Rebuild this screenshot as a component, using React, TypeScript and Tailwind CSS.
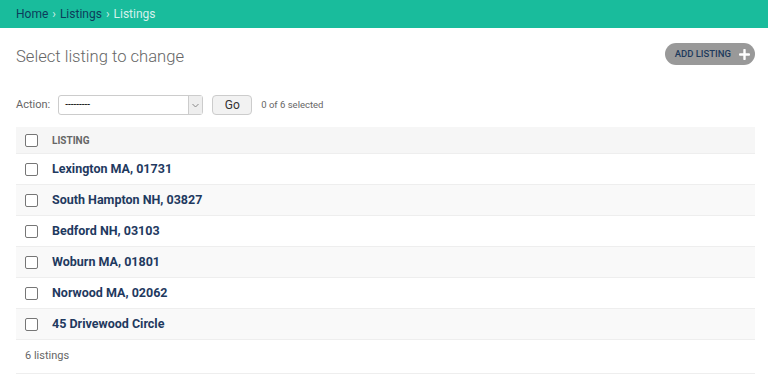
const listings = [
  "Lexington MA, 01731",
  "South Hampton NH, 03827",
  "Bedford NH, 03103",
  "Woburn MA, 01801",
  "Norwood MA, 02062",
  "45 Drivewood Circle",
];

const Box = () => (
  <span className="block h-[13px] w-[13px] rounded-[2px] border border-[#767676] bg-white" />
);

export default function App() {
  return (
    <div className="min-h-[376px] bg-white font-['Roboto',sans-serif] text-[13px] text-[#333]">
      {/* breadcrumbs */}
      <div className="flex h-[28px] items-center bg-[#19bc9c] px-4 text-[12px]">
        <span className="text-[#0c3c5b]">Home</span>
        <span className="px-[4px] text-[#cfeee8]">›</span>
        <span className="text-[#0c3c5b]">Listings</span>
        <span className="px-[4px] text-[#cfeee8]">›</span>
        <span className="text-[#d5f1ec]">Listings</span>
      </div>

      <div className="pl-4 pr-[13px]">
        <div className="flex items-center justify-between pt-[15px]">
          <h1 className="text-[16.6px] font-light text-[#666]">Select listing to change</h1>
          <button className="mb-[6px] flex h-[22px] items-center gap-[8px] rounded-full bg-[#999] pl-[10px] pr-[5px] text-[9.5px] font-medium uppercase text-[#1e3a5c]">
            Add listing
            <svg width="11" height="11" viewBox="0 0 12 12">
              <path d="M6 1v10M1 6h10" stroke="#fff" strokeWidth="2.6" strokeLinecap="round" />
            </svg>
          </button>
        </div>

        {/* actions */}
        <div className="mt-[23px] flex h-[22px] items-center text-[11px]">
          <span className="mr-[8px] text-[11px] text-[#666]">Action:</span>
          <div className="flex h-[20px] w-[145px] items-center rounded-[3px] border border-[#ccc] bg-white">
            <span className="flex-1 pl-[6px] text-[10px] leading-none text-black">---------</span>
            <span className="flex h-full w-[14px] items-center justify-center border-l border-[#ccc] bg-[#eee]">
              <svg width="7" height="5" viewBox="0 0 7 5">
                <path d="M0.5 1l3 3 3-3" fill="none" stroke="#888" strokeWidth="1" />
              </svg>
            </span>
          </div>
          <button className="ml-[9px] h-[20px] w-[40px] rounded-[4px] border border-[#ccc] bg-[#f2f2f2] text-[12px] text-[#333]">
            Go
          </button>
          <span className="ml-[9px] text-[9.5px] text-[#666]">0 of 6 selected</span>
        </div>

        {/* table */}
        <div className="mt-[11px]">
          <div className="flex h-[27px] items-center border-b border-[#eee] bg-[#f6f6f6]">
            <span className="w-[36px] pl-[9px]">
              <Box />
            </span>
            <span className="text-[10px] font-bold uppercase text-[#666]">Listing</span>
          </div>
          {listings.map((name, i) => (
            <div
              key={name}
              className={
                "flex h-[31px] items-center border-b border-[#eee] " +
                (i % 2 === 1 ? "bg-[#f9f9f9]" : "bg-white")
              }
            >
              <span className="w-[36px] pl-[9px]">
                <Box />
              </span>
              <span className="text-[12.5px] font-bold text-[#1f3a5f]">{name}</span>
            </div>
          ))}
          <div className="flex h-[34px] items-center border-b border-[#eee] pl-[9px] text-[11px] text-[#666]">
            6 listings
          </div>
        </div>
      </div>
    </div>
  );
}
